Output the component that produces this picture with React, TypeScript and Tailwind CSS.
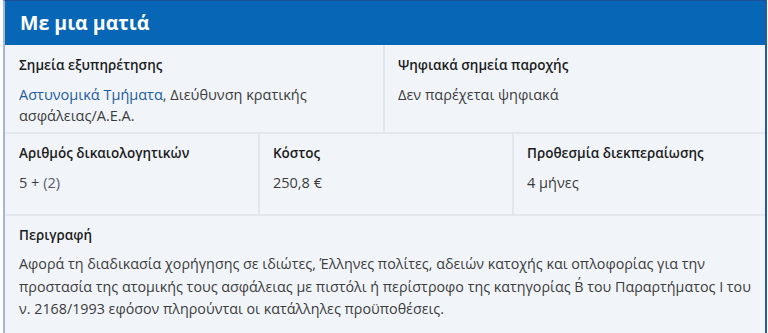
export default function App() {
  return (
    <div className="w-[768px] h-[333px] overflow-hidden bg-white pl-[3px] pr-px font-['Open_Sans',sans-serif]">
      <div className="h-full border-l-2 border-r-2 border-t border-l-[#a7b7d0] border-r-[#1f5ba8] border-t-[#1b4f94] bg-[#f1f5fa]">
        <div className="h-[44px] bg-[#0766b5] flex items-center px-[15px]">
          <h2 className="text-white font-bold text-[19.5px] leading-none">Με μια ματιά</h2>
        </div>

        <div className="grid grid-cols-2 h-[89px] border-b-2 border-[#e2e7ee]">
          <div className="px-[14px] pt-[10px] border-r-2 border-[#e2e7ee]">
            <h3 className="text-[13.5px] font-semibold text-[#1c1c1c]">Σημεία εξυπηρέτησης</h3>
            <p className="mt-[9px] text-[14.5px] leading-[21px] text-[#3c3c3c]">
              <a href="#" className="text-[#1f5c9e]">Αστυνομικά Τμήματα</a>, Διεύθυνση κρατικής
              <br />
              ασφάλειας/Α.Ε.Α.
            </p>
          </div>
          <div className="px-[13px] pt-[10px]">
            <h3 className="text-[13.5px] font-semibold text-[#1c1c1c]">Ψηφιακά σημεία παροχής</h3>
            <p className="mt-[9px] text-[14.5px] leading-[21px] text-[#3c3c3c]">Δεν παρέχεται ψηφιακά</p>
          </div>
        </div>

        <div className="grid grid-cols-[255px_254px_1fr] h-[82px] border-b-2 border-[#e2e7ee]">
          <div className="px-[14px] pt-[9px] border-r-2 border-[#e2e7ee]">
            <h3 className="text-[13.5px] font-semibold text-[#1c1c1c]">Αριθμός δικαιολογητικών</h3>
            <p className="mt-[9px] text-[14.5px] leading-[21px] text-[#3c3c3c]">
              5 + <span className="text-[#5a5a6e]">(2)</span>
            </p>
          </div>
          <div className="px-[13px] pt-[9px] border-r-2 border-[#e2e7ee]">
            <h3 className="text-[13.5px] font-semibold text-[#1c1c1c]">Κόστος</h3>
            <p className="mt-[9px] text-[14.5px] leading-[21px] text-[#3c3c3c]">250,8 €</p>
          </div>
          <div className="px-[13px] pt-[9px]">
            <h3 className="text-[13.5px] font-semibold text-[#1c1c1c]">Προθεσμία διεκπεραίωσης</h3>
            <p className="mt-[9px] text-[14.5px] leading-[21px] text-[#3c3c3c]">4 μήνες</p>
          </div>
        </div>

        <div className="px-[14px] pt-[9px]">
          <h3 className="text-[13.5px] font-semibold text-[#1c1c1c]">Περιγραφή</h3>
          <p className="mt-[8px] whitespace-nowrap text-[14.3px] leading-[22.5px] text-[#3c3c3c]">
            Αφορά τη διαδικασία χορήγησης σε ιδιώτες, Έλληνες πολίτες, αδειών κατοχής και οπλοφορίας για την
            <br />
            προστασία της ατομικής τους ασφάλειας με πιστόλι ή περίστροφο της κατηγορίας Β΄ του Παραρτήματος Ι του
            <br />
            ν. 2168/1993 εφόσον πληρούνται οι κατάλληλες προϋποθέσεις.
          </p>
        </div>
      </div>
    </div>
  );
}
